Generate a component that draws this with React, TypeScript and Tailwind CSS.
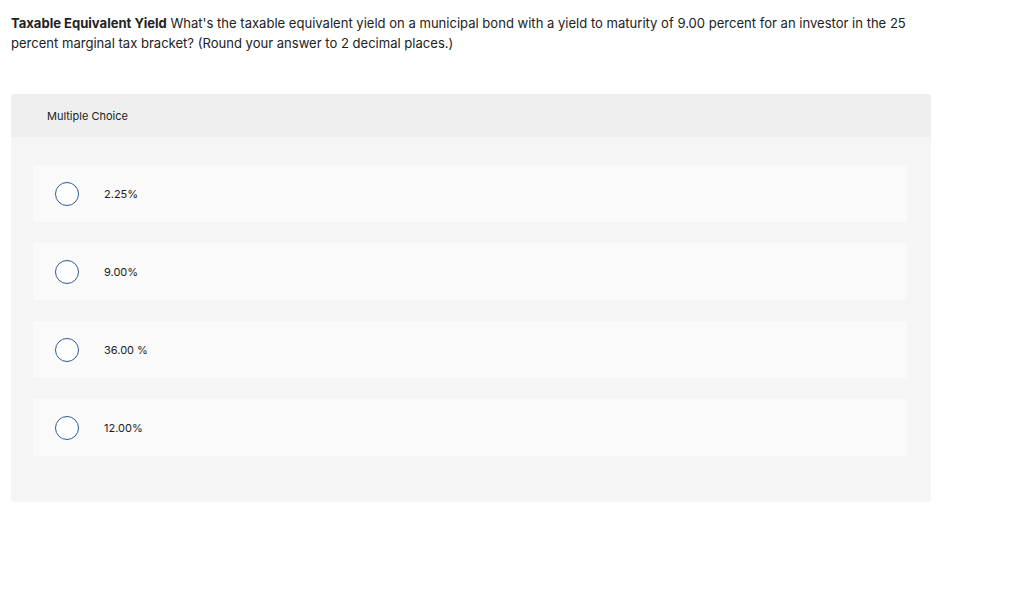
import React from 'react';

const options = ['2.25%', '9.00%', '36.00 %', '12.00%'];

export default function App() {
  return (
    <div className="min-h-[591px] bg-white text-[#222] font-['Inter','Lato',sans-serif]">
      <p className="px-[11px] pt-[13px] text-[13.05px] leading-[20px]">
        <b className="font-bold">Taxable Equivalent Yield</b> What's the taxable equivalent yield
        on a municipal bond with a yield to maturity of 9.00 percent for an investor in the 25
        <br />
        percent marginal tax bracket? (Round your answer to 2 decimal places.)
      </p>

      <div className="ml-[11px] mt-[41px] w-[920px] rounded-[3px] bg-[#f5f5f5] overflow-hidden">
        <div className="h-[43px] bg-[#efefef] flex items-center pl-[36px] pt-[2px] text-[11px]">
          Multiple Choice
        </div>
        <div className="pl-[22px] pr-[24px] pt-[28px] pb-[46px] flex flex-col gap-[21px]">
          {options.map(o => (
            <div
              key={o}
              className="h-[57px] bg-[#fafafa] rounded-[2px] flex items-center pl-[22px]"
            >
              <span className="w-[24px] h-[24px] rounded-full border border-[#2d5b96] bg-white" />
              <span className="ml-[25px] pt-[2px] text-[11px]">{o}</span>
            </div>
          ))}
        </div>
      </div>
    </div>
  );
}
